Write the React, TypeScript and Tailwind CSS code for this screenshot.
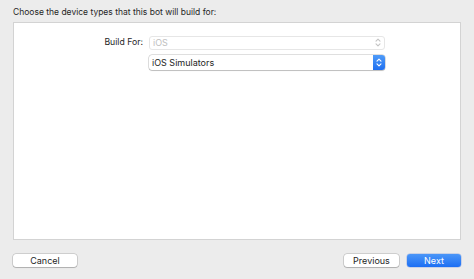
import React from "react";

function Chevrons({ color }: { color: string }) {
  return (
    <svg width="6" height="9" viewBox="0 0 6 9" fill="none" stroke={color} strokeWidth="1.1" strokeLinecap="round" strokeLinejoin="round">
      <path d="M1 3.2 L3 1.2 L5 3.2" />
      <path d="M1 5.8 L3 7.8 L5 5.8" />
    </svg>
  );
}

export default function App() {
  return (
    <div
      className="w-[474px] h-[279px] bg-[#ececec] flex flex-col text-[8.5px] text-[#262626] overflow-hidden"
      style={{ fontFamily: "Inter, 'Liberation Sans', sans-serif" }}
    >
      <div className="px-[13px] pt-[6px] h-[22px] leading-[12px]">Choose the device types that this bot will build for:</div>
      <div className="mx-[13px] w-[448px] h-[218px] bg-white border border-[#d3d3d3] pt-[12px]">
        <div className="flex items-center h-[15px]">
          <div className="w-[129px] text-right text-[#262626] text-[8.7px]">Build For:</div>
          <div className="ml-[6px] w-[236px] h-[14px] border border-[#e6e6e6] rounded-[3px] flex items-center justify-between pl-[3px] pr-[3px]">
            <span className="text-[#c0c0c0] text-[9px]">iOS</span>
            <Chevrons color="#c4c4c4" />
          </div>
        </div>
        <div className="flex items-center h-[15px] mt-[5px]">
          <div className="w-[129px]" />
          <div className="ml-[6px] w-[236px] h-[15px] bg-white rounded-[3px] flex items-stretch justify-between shadow-[0_0_0_0.5px_rgba(0,0,0,0.25),0_1px_1px_rgba(0,0,0,0.15)]">
            <span className="pl-[3px] flex items-center text-[#1e1e1e] text-[9px]">iOS Simulators</span>
            <div className="w-[12px] rounded-r-[3px] bg-gradient-to-b from-[#4f9bf8] to-[#1f6ff0] flex items-center justify-center">
              <Chevrons color="#ffffff" />
            </div>
          </div>
        </div>
      </div>
      <div className="flex items-center px-[13px] mt-[13px] h-[14px]">
        <button className="w-[64px] h-[13px] bg-white rounded-[3px] shadow-[0_0_0_0.5px_rgba(0,0,0,0.25),0_1px_1px_rgba(0,0,0,0.15)] text-[9px] leading-[13px] text-[#1e1e1e]">
          Cancel
        </button>
        <div className="flex-1" />
        <button className="w-[55px] h-[13px] bg-white rounded-[3px] shadow-[0_0_0_0.5px_rgba(0,0,0,0.25),0_1px_1px_rgba(0,0,0,0.15)] text-[9px] leading-[13px] text-[#1e1e1e]">
          Previous
        </button>
        <button className="ml-[8px] w-[54px] h-[13px] rounded-[3px] bg-gradient-to-b from-[#4a96f8] to-[#1b6ef3] text-[9px] leading-[13px] text-white shadow-[0_0_0_0.5px_rgba(0,60,200,0.3)]">
          Next
        </button>
      </div>
    </div>
  );
}
